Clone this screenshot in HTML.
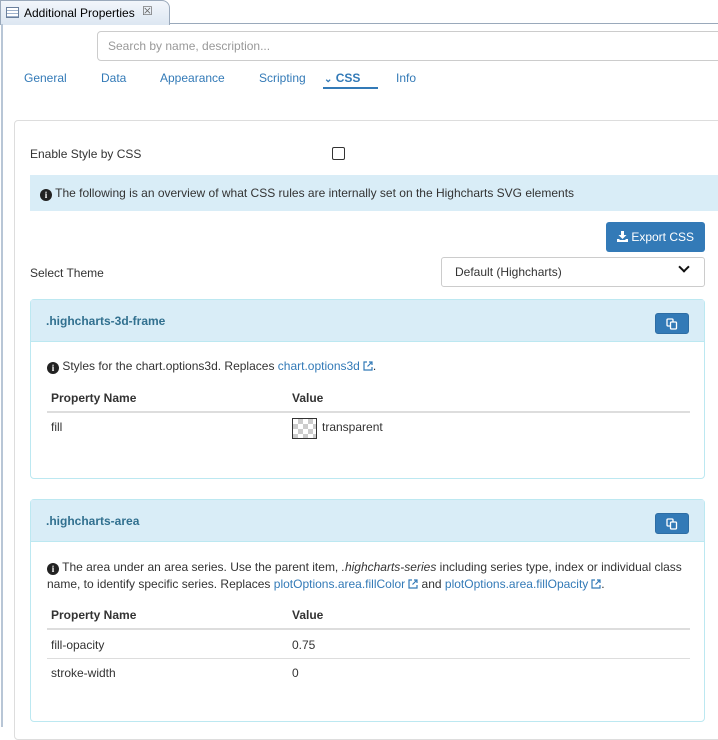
<!DOCTYPE html>
<html><head><style>
*{margin:0;padding:0;box-sizing:border-box}
body{width:718px;height:727px;overflow:hidden;background:#fff;font-family:"Liberation Sans",sans-serif;font-size:12px;color:#333;position:relative}
.a{position:absolute}
.lnk{color:#337ab7}
.sec{position:absolute;left:30px;width:675px;border:1px solid #bce8f1;border-radius:4px;background:#fff}
.sh{height:42px;background:#d9edf7;border-bottom:1px solid #bce8f1;position:relative}
.sh span{position:absolute;left:15px;top:14px;font-weight:bold;color:#31708f;font-size:12px}
.cb{position:absolute;right:15px;top:13px;width:34px;height:21px;background:#337ab7;border-radius:3px;border:1px solid #2e6da4}
.cb svg{position:absolute;left:10px;top:4px}
.info{display:inline-block;width:12px;height:12px;border-radius:50%;background:#222;color:#fff;font-size:9px;font-weight:bold;text-align:center;line-height:12px;font-family:"Liberation Serif",serif;vertical-align:-1px}
.th{font-weight:bold}
.ext{display:inline-block;vertical-align:-1px;margin-left:3px}
</style></head><body>
<svg width="0" height="0" style="position:absolute"><defs>
<symbol id="ex" viewBox="0 0 10 10"><path d="M4 1H1v8h8V6" fill="none" stroke="#337ab7" stroke-width="1.2"/><path d="M6 1h3v3M9 1L4.5 5.5" fill="none" stroke="#337ab7" stroke-width="1.2"/></symbol>
<symbol id="cp" viewBox="0 0 12 12"><rect x="1" y="1" width="6" height="7" rx="1" fill="none" stroke="#fff" stroke-width="1.3"/><rect x="4.5" y="4" width="6" height="7" rx="1" fill="#337ab7" stroke="#fff" stroke-width="1.3"/></symbol>
</defs></svg>
<div class="a" style="left:0;top:0;width:718px;height:24px;background:#fff;border-bottom:1px solid #9aa9bb"></div>
<div class="a" style="left:0;top:0;width:170px;height:25px;background:linear-gradient(#f2f6fb,#dde7f2);border:1px solid #9aa9bb;border-bottom:none;border-radius:0 8px 0 0"></div>
<div class="a" style="left:6px;top:7px;width:13px;height:11px;border:1px solid #6a7f9c;background:repeating-linear-gradient(#fff 0 2px,#9fb2cc 2px 3px)"></div>
<div class="a" style="left:24px;top:6px;font-size:12px;color:#000">Additional Properties</div>
<div class="a" style="left:142px;top:4px;font-size:12px;color:#666">☒</div>
<div class="a" style="left:1px;top:24px;width:2px;height:703px;background:#b8c6d6"></div>
<div class="a" style="left:97px;top:31px;width:630px;height:30px;border:1px solid #ccc;border-radius:4px"></div>
<div class="a" style="left:108px;top:39px;color:#999">Search by name, description...</div>
<div class="a lnk" style="left:24px;top:71px">General</div>
<div class="a lnk" style="left:101px;top:71px">Data</div>
<div class="a lnk" style="left:160px;top:71px">Appearance</div>
<div class="a lnk" style="left:259px;top:71px">Scripting</div>
<div class="a lnk" style="left:324px;top:71px;font-weight:bold"><span style="font-size:10px">⌄</span> CSS</div>
<div class="a" style="left:323px;top:87px;width:55px;height:2px;background:#337ab7"></div>
<div class="a lnk" style="left:396px;top:71px">Info</div>
<div class="a" style="left:14px;top:120px;width:720px;height:620px;border:1px solid #ddd;border-radius:4px"></div>
<div class="a" style="left:30px;top:147px">Enable Style by CSS</div>
<div class="a" style="left:332px;top:147px;width:13px;height:13px;border:1px solid #333;border-radius:2px"></div>
<div class="a" style="left:30px;top:175px;width:688px;height:36px;background:#d9edf7"></div>
<div class="a" style="left:40px;top:186px"><span class="info">i</span> The following is an overview of what CSS rules are internally set on the Highcharts SVG elements</div>
<div class="a" style="left:606px;top:222px;width:99px;height:30px;background:#337ab7;border-radius:3px;color:#fff;font-size:12px;line-height:30px;text-align:center"><svg width="11" height="11" viewBox="0 0 11 11" style="vertical-align:-1px"><path d="M4 0h3v4h2.5L5.5 8 1.5 4H4z M0 8h2l1 1h5l1-1h2v3H0z" fill="#fff"/></svg> Export CSS</div>
<div class="a" style="left:30px;top:266px">Select Theme</div>
<div class="a" style="left:441px;top:257px;width:264px;height:30px;border:1px solid #ccc;border-radius:3px"></div>
<div class="a" style="left:455px;top:265px">Default (Highcharts)</div>
<div class="a" style="left:680px;top:263px;width:8px;height:8px;border-right:2px solid #111;border-bottom:2px solid #111;transform:rotate(45deg)"></div>

<div class="sec" style="top:299px;height:180px">
<div class="sh"><span>.highcharts-3d-frame</span><div class="cb"><svg width="12" height="12"><use href="#cp"/></svg></div></div>
<div class="a" style="left:16px;top:59px"><span class="info">i</span> Styles for the chart.options3d. Replaces <span class="lnk">chart.options3d</span><svg class="ext" width="10" height="10"><use href="#ex"/></svg>.</div>
<div class="a th" style="left:20px;top:91px">Property Name</div>
<div class="a th" style="left:261px;top:91px">Value</div>
<div class="a" style="left:16px;top:111px;width:643px;height:2px;background:#ddd"></div>
<div class="a" style="left:20px;top:120px">fill</div>
<div class="a" style="left:261px;top:118px;width:25px;height:21px;border:1px solid #333;background:repeating-conic-gradient(#ccc 0 25%,#fff 0 50%) 0 0/10px 10px"></div>
<div class="a" style="left:291px;top:120px">transparent</div>
</div>

<div class="sec" style="top:499px;height:223px">
<div class="sh"><span>.highcharts-area</span><div class="cb"><svg width="12" height="12"><use href="#cp"/></svg></div></div>
<div class="a" style="left:16px;top:59px;width:650px;line-height:17px"><span class="info">i</span> The area under an area series. Use the parent item, <i>.highcharts-series</i> including series type, index or individual class name, to identify specific series. Replaces <span class="lnk">plotOptions.area.fillColor</span><svg class="ext" width="10" height="10"><use href="#ex"/></svg> and <span class="lnk">plotOptions.area.fillOpacity</span><svg class="ext" width="10" height="10"><use href="#ex"/></svg>.</div>
<div class="a th" style="left:20px;top:108px">Property Name</div>
<div class="a th" style="left:261px;top:108px">Value</div>
<div class="a" style="left:16px;top:128px;width:643px;height:2px;background:#ddd"></div>
<div class="a" style="left:20px;top:138px">fill-opacity</div>
<div class="a" style="left:261px;top:138px">0.75</div>
<div class="a" style="left:16px;top:158px;width:643px;height:1px;background:#ddd"></div>
<div class="a" style="left:20px;top:166px">stroke-width</div>
<div class="a" style="left:261px;top:166px">0</div>
</div>
</body></html>
